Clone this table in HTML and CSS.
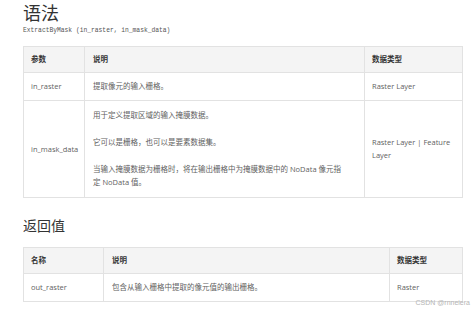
FILE: index.html
```html
<!DOCTYPE html>
<html lang="zh-CN">
<head>
<meta charset="utf-8">
<link rel="stylesheet" href="styles.css">
</head>
<body>
<div class="page">
  <h1 class="h1">语法</h1>
  <div class="sig">ExtractByMask (in_raster, in_mask_data)</div>
  <table class="tbl t1">
    <colgroup><col class="c1"><col class="c2"><col class="c3"></colgroup>
    <thead>
      <tr><th>参数</th><th class="mid">说明</th><th>数据类型</th></tr>
    </thead>
    <tbody>
      <tr class="r1"><td>in_raster</td><td class="mid">提取像元的输入栅格。</td><td>Raster Layer</td></tr>
      <tr class="r2"><td>in_mask_data</td><td class="mid">
        <p>用于定义提取区域的输入掩膜数据。</p>
        <p>它可以是栅格，也可以是要素数据集。</p>
        <p>当输入掩膜数据为栅格时，将在输出栅格中为掩膜数据中的 NoData 像元指定 NoData 值。</p>
      </td><td>Raster Layer | Feature Layer</td></tr>
    </tbody>
  </table>
  <h2 class="h2">返回值</h2>
  <table class="tbl t2">
    <colgroup><col class="d1"><col class="d2"><col class="d3"></colgroup>
    <thead>
      <tr><th>名称</th><th class="mid">说明</th><th>数据类型</th></tr>
    </thead>
    <tbody>
      <tr class="r1"><td>out_raster</td><td class="mid">包含从输入栅格中提取的像元值的输出栅格。</td><td>Raster</td></tr>
    </tbody>
  </table>
</div>
<div class="wm">CSDN @rnneiera</div>
</body>
</html>
```

FILE: styles.css
```css
html, body {
  margin: 0;
  padding: 0;
  background: #ffffff;
}
body {
  width: 474px;
  height: 312px;
  overflow: hidden;
  position: relative;
  font-family: "Open Sans", "Noto Sans CJK SC", sans-serif;
  color: #5f5f5f;
}
.page {
  padding: 0 12px 0 23px;
}
.h1 {
  margin: 0;
  padding-top: 0;
  font-size: 18px;
  line-height: 24px;
  font-weight: 400;
  color: #333;
  font-family: "Noto Sans CJK SC", sans-serif;
}
.sig {
  font-family: "Liberation Mono", "DejaVu Sans Mono", monospace;
  font-size: 6.3px;
  line-height: 9px;
  color: #555;
  margin-top: 2px;
}
.tbl {
  border-collapse: collapse;
  width: 439px;
  table-layout: fixed;
  font-size: 7.5px;
  line-height: 13px;
}
.t1 {
  margin-top: 11px;
}
.c1 { width: 61px; }
.c2 { width: 280px; }
.c3 { width: 98px; }
.d1 { width: 80px; }
.d2 { width: 286px; }
.d3 { width: 73px; }
.tbl th, .tbl td {
  border: 1px solid #e2e2e2;
  text-align: left;
  vertical-align: middle;
  padding: 0 7px;
}
.tbl .mid {
  padding-left: 8px;
}
.tbl th {
  background: #f4f4f4;
  color: #333;
  font-weight: 700;
  height: 25px;
  padding-top: 0;
  padding-bottom: 0;
}
.tbl td {
  color: #5f5f5f;
}
.r1 td {
  height: 27px;
}
.r2 td {
  padding-top: 8px;
  padding-bottom: 8px;
}
.r2 td.mid {
  padding-right: 18px;
}
.r2 td p {
  margin: 0 0 14px 0;
}
.r2 td p:last-child {
  margin-bottom: 0;
}
.h2 {
  margin: 0;
  padding-top: 17px;
  font-size: 14px;
  line-height: 20px;
  font-weight: 400;
  color: #333;
  font-family: "Noto Sans CJK SC", sans-serif;
}
.t2 {
  margin-top: 12px;
}
.wm {
  position: absolute;
  right: 4px;
  top: 298px;
  font-size: 7px;
  line-height: 10px;
  color: #b5b5b5;
  font-family: "Liberation Sans", sans-serif;
}
```
